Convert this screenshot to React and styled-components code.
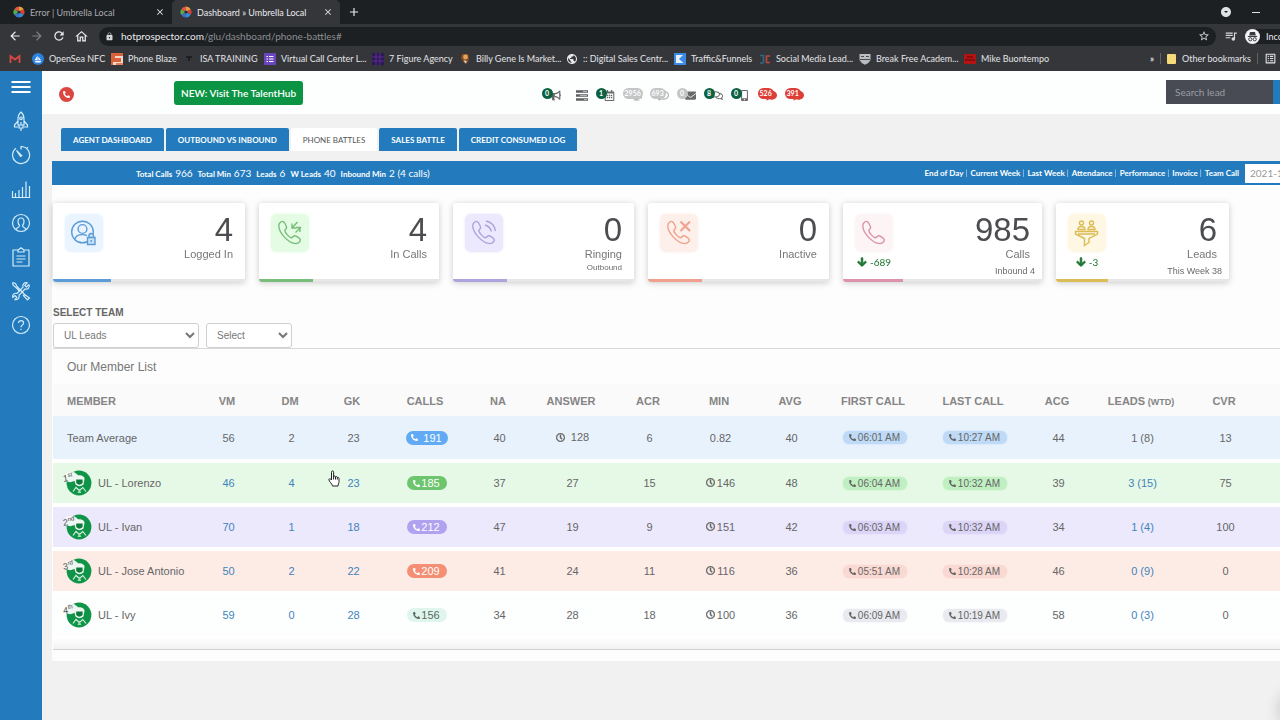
import React from "react";
import styled, { createGlobalStyle } from "styled-components";
import {
    MdArrowBack,
    MdArrowForward,
    MdRefresh,
    MdOutlineHome,
    MdLock,
    MdStarBorder,
    MdQueueMusic,
    MdClose,
    MdAdd,
    MdPublic,
    MdListAlt,
    MdArrowDropDownCircle,
} from "react-icons/md";
import {
    FaPhoneAlt,
    FaBullhorn,
    FaRegCalendarAlt,
    FaDesktop,
    FaRegComment,
    FaEnvelope,
    FaRegComments,
    FaMobileAlt,
    FaArrowDown,
    FaRegClock,
    FaComment,
} from "react-icons/fa";

const QueueBars = () => (
    <svg width="12" height="11" viewBox="0 0 12 11">
        <path d="M0 1.5H12M0 5.5H12M0 9.5H12" stroke="#5f6062" strokeWidth="2.6" />
        <path d="M7 1.5H11M4 5.5H11M8 9.5H11" stroke="#c9caca" strokeWidth="0.8" />
    </svg>
);

const bookmarks = [
    { label: "", width: 27, icon: "gmail" },
    { label: "OpenSea NFC", width: 79, icon: "sea" },
    { label: "Phone Blaze", width: 72, icon: "blaze" },
    { label: "ISA TRAINING", width: 81, icon: "isa" },
    { label: "Virtual Call Center L...", width: 108, icon: "list" },
    { label: "7 Figure Agency", width: 87, icon: "grid" },
    { label: "Billy Gene Is Market...", width: 107, icon: "billy" },
    { label: ":: Digital Sales Centr...", width: 108, icon: "globe" },
    { label: "Traffic&Funnels", width: 85, icon: "traffic" },
    { label: "Social Media Lead...", width: 100, icon: "social" },
    { label: "Break Free Academ...", width: 105, icon: "shield" },
    { label: "Mike Buontempo", width: 90, icon: "mike" },
];

const alerts = [
    { Icon: FaBullhorn, count: "0", tone: "#0b6141" },
    { Icon: QueueBars },
    { Icon: FaRegCalendarAlt, count: "1", tone: "#0b6141" },
    { Icon: FaDesktop, count: "2956", tone: "#c4c6c6", muted: true },
    { Icon: FaRegComment, count: "693", tone: "#c4c6c6", muted: true },
    { Icon: FaEnvelope, count: "0", tone: "#c4c6c6" },
    { Icon: FaRegComments, count: "8", tone: "#0b6141" },
    { Icon: FaMobileAlt, count: "0", tone: "#0b6141" },
    { Icon: FaComment, count: "526", tone: "#dc3f37", iconTone: "#dc3f37" },
    { Icon: FaComment, count: "391", tone: "#dc3f37", iconTone: "#dc3f37" },
];

const totals = [
    ["Total Calls", "966"],
    ["Total Min", "673"],
    ["Leads", "6"],
    ["W Leads", "40"],
    ["Inbound Min", "2 (4 calls)"],
];

const reports = ["End of Day", "Current Week", "Last Week", "Attendance", "Performance", "Invoice", "Team Call"];

const stats = [
    { icon: "user", value: "4", label: "Logged In", color: "#5b9bd8", tint: "#e9f4fe" },
    { icon: "incall", value: "4", label: "In Calls", color: "#78bd7a", tint: "#e3fce3" },
    { icon: "ringing", value: "0", label: "Ringing", note: "Outbound", color: "#aea3dc", tint: "#ece8fd" },
    { icon: "inactive", value: "0", label: "Inactive", color: "#f0a08c", tint: "#fdefe9" },
    { icon: "phone", value: "985", label: "Calls", note: "Inbound 4", trend: "-689", color: "#dc93aa", tint: "#fdf4f6" },
    { icon: "funnel", value: "6", label: "Leads", note: "This Week 38", trend: "-3", color: "#dcbc55", tint: "#fdf7e3" },
];

const columns = [
    ["MEMBER", 142],
    ["VM", 64],
    ["DM", 62],
    ["GK", 62],
    ["CALLS", 84],
    ["NA", 62],
    ["ANSWER", 84],
    ["ACR", 70],
    ["MIN", 72],
    ["AVG", 70],
    ["FIRST CALL", 96],
    ["LAST CALL", 104],
    ["ACG", 64],
    ["LEADS", 104],
    ["CVR", 62],
    ["", 25],
];

const average = {
    vm: 56, dm: 2, gk: 23, calls: 191, na: 40, answer: 128, acr: 6, min: "0.82", avg: 40,
    first: "06:01 AM", last: "10:27 AM", acg: 44, leads: "1 (8)", cvr: 13,
};

const members = [
    {
        name: "UL - Lorenzo", rank: "1", suffix: "st", row: "#e6f9e6", pill: "#6dc56d", time: "#c0f0c2", ink: "#fff",
        vm: 46, dm: 4, gk: 23, calls: 185, na: 37, answer: 27, acr: 15, min: 146, avg: 48,
        first: "06:04 AM", last: "10:32 AM", acg: 39, leads: "3 (15)", cvr: 75,
    },
    {
        name: "UL - Ivan", rank: "2", suffix: "nd", row: "#ece9fc", pill: "#b1a2f0", time: "#dcd5f8", ink: "#fff",
        vm: 70, dm: 1, gk: 18, calls: 212, na: 47, answer: 19, acr: 9, min: 151, avg: 42,
        first: "06:03 AM", last: "10:32 AM", acg: 34, leads: "1 (4)", cvr: 100,
    },
    {
        name: "UL - Jose Antonio", rank: "3", suffix: "rd", row: "#fdece6", pill: "#f58f74", time: "#f9d9d2", ink: "#fff",
        vm: 50, dm: 2, gk: 22, calls: 209, na: 41, answer: 24, acr: 11, min: 116, avg: 36,
        first: "05:51 AM", last: "10:28 AM", acg: 46, leads: "0 (9)", cvr: 0,
    },
    {
        name: "UL - Ivy", rank: "4", suffix: "th", row: "#fdfefe", pill: "#e0f6ed", time: "#e9eaf0", ink: "#5a6b66",
        vm: 59, dm: 0, gk: 28, calls: 156, na: 34, answer: 28, acr: 18, min: 100, avg: 36,
        first: "06:09 AM", last: "10:19 AM", acg: 58, leads: "0 (3)", cvr: 0,
    },
];

const Favicon = () => (
    <svg width="12" height="12" viewBox="0 0 12 12">
        <path d="M6 6V0.5A5.5 5.5 0 0 1 10.8 3.3Z" fill="#e8a13a" />
        <path d="M6 6L10.8 3.3A5.5 5.5 0 0 1 10.8 8.8Z" fill="#d8423a" />
        <path d="M6 6L10.8 8.8A5.5 5.5 0 0 1 6 11.5Z" fill="#2f8fd0" />
        <path d="M6 6V11.5A5.5 5.5 0 0 1 1.2 8.8Z" fill="#3f6fc4" />
        <path d="M6 6L1.2 8.8A5.5 5.5 0 0 1 1.2 3.3Z" fill="#55b04a" />
        <path d="M6 6L1.2 3.3A5.5 5.5 0 0 1 6 0.5Z" fill="#e0564b" />
        <circle cx="6" cy="6" r="1.6" fill="#2b2c30" />
    </svg>
);

const bookmarkArt = {
    gmail: (
        <path d="M1.5 10V3L6 6.5L10.5 3V10" fill="none" stroke="#d9493e" strokeWidth="1.8" />
    ),
    sea: (
        <>
            <circle cx="6" cy="6" r="6" fill="#2a81e0" />
            <path d="M5.6 2.5V7H2.8ZM6.4 3.4L8.8 7H6.4ZM2.5 7.8H9.5L8.3 9.4H3.8Z" fill="#fff" />
        </>
    ),
    blaze: (
        <>
            <rect width="12" height="12" fill="#f2d8ca" />
            <path d="M0 0H12V3H4V5H10V9H2V12H0Z" fill="#d9623b" />
            <path d="M3 7H8M5 11H12" stroke="#d9623b" strokeWidth="1.4" />
        </>
    ),
    isa: <path d="M3 4H9M6 4V8" stroke="#17181b" strokeWidth="1.6" />,
    list: (
        <>
            <rect width="12" height="12" rx="1" fill="#6a45bd" />
            <path d="M2.5 3.5H4M2.5 6H4M2.5 8.5H4M5 3.5H9.5M5 6H9.5M5 8.5H9.5" stroke="#fff" strokeWidth="1.2" />
        </>
    ),
    grid: (
        <>
            <rect width="12" height="12" fill="#2a1a52" />
            <path d="M0 4H12M0 8H12M4 0V12M8 0V12" stroke="#5a2a90" strokeWidth="1" />
        </>
    ),
    billy: (
        <>
            <path d="M3 1H9L10 6L8 11L4 9L2 5Z" fill="#8a4d20" />
            <circle cx="6.5" cy="4" r="2.4" fill="#e3a45f" />
            <path d="M5 7L8 8.5L6 10.5Z" fill="#ddd" />
        </>
    ),
    traffic: (
        <>
            <rect width="12" height="12" fill="#3b8ae6" />
            <path d="M2 2H9L5 6L9.5 10H2Z" fill="#e8f2fd" />
        </>
    ),
    social: (
        <>
            <path d="M1 2.5H4.5V9Q4 10.5 1 10" fill="none" stroke="#2e6684" strokeWidth="1.7" />
            <path d="M11 3H7.5V9.5H11" fill="none" stroke="#b8473e" strokeWidth="1.7" />
        </>
    ),
    shield: (
        <>
            <path d="M0.5 1H11.5V7Q10 10.5 6 11.8Q2 10.5 0.5 7Z" fill="#b9bcc0" />
            <path d="M2 3.5H5M7 3.5H10M1 6.5H11" stroke="#4a4d52" strokeWidth="1.2" />
        </>
    ),
    mike: (
        <>
            <rect y="1" width="12" height="10" fill="#b31313" />
            <path d="M3 4H9M1 7H11" stroke="#5a0808" strokeWidth="1.2" />
        </>
    ),
};

const BookmarkIcon = ({ name }) =>
    name === "globe" ? (
        <MdPublic size={12} color="#e8eaed" />
    ) : (
        <svg width="12" height="12" viewBox="0 0 12 12">
            {bookmarkArt[name]}
        </svg>
    );

const navArt = {
    Launch: (
        <path d="M10 1C7.6 3 7 5.4 7 8V14H13V8C13 5.4 12.4 3 10 1ZM7 10L3.5 14V16H7M13 10L16.5 14V16H13M8 14V17H12V14M10 17V20M10 6A1.3 1.3 0 1 0 10 8.6A1.3 1.3 0 1 0 10 6M10 11V14" />
    ),
    Timer: <path d="M5 3.2A8.5 8.5 0 1 0 10 1.5V4.5M10.8 10.6L5.5 5.5L9.5 11.4ZM15.5 3.5L16.8 2.2" />,
    Reports: <path d="M1.5 12V18.5H4.5V14M1.5 18.5H18.5V7M8 18.5V11M11.5 18.5V8M15 18.5V2.5M4.5 18.5V14" />,
    Profile: (
        <path d="M10 1.5A8.5 8.5 0 1 0 10 18.5A8.5 8.5 0 1 0 10 1.5M5 16.6C5 14.5 8.5 15 8.5 12.5C6.5 10.5 6 5 10 5C14 5 13.5 10.5 11.5 12.5C11.5 15 15 14.5 15 16.6" />
    ),
    Tasks: (
        <path d="M7 3H2V19H18V3H13M7 5V3L10 0.8L13 3V5ZM5.5 9H14.5M5.5 12H14.5M5.5 15H11.5" />
    ),
    Tools: (
        <path d="M1.5 1.5L4.5 2.5L6 5.5L14.5 14.5M13 13L18.5 17L16.5 18.8L12 14M18 3.5L15.5 6L13.8 4.4L16.2 1.8C13.5 0.8 11 3.5 12 6.2L6 12.5C3.5 11.5 0.8 14 1.8 16.5L4 14.6L5.8 16.4L4 18.6C6.5 19.3 9 16.8 8 14.3L14 8C16.8 9 19.2 6 18 3.5M1.5 1.5L2 4L5 6.5L9 10.5" />
    ),
    Help: (
        <path d="M10 1.5A8.5 8.5 0 1 0 10 18.5A8.5 8.5 0 1 0 10 1.5M7.5 8C7.5 4.8 12.6 4.8 12.6 8C12.6 10 10 9.8 10 12.2M10 13.8V15" />
    ),
};

const handset =
    "M7.2 2.6C5.6 1.8 3 3.8 2.8 6.2C2.4 13.5 12.5 24.6 20 24.6C22.6 24.6 25 22 24.2 20.4C23.4 19 20.2 16.8 18.6 16.8C17.2 16.8 16.8 18.8 15.4 18.8C13.4 18.6 8.8 13.6 8.8 11.6C8.8 10.4 10.8 10 10.6 8.6C10.4 6.8 8.6 3.4 7.2 2.6Z";

const statArt = {
    user: (
        <>
            <circle cx="12.5" cy="13" r="10.8" />
            <circle cx="12.5" cy="10" r="4.4" />
            <path d="M4.8 20.5C5.5 16.8 8.6 15.6 12.5 15.6C14.5 15.6 15.8 16 17 16.6" />
            <path d="M17.5 18.5H25V25.5H17.5ZM19 18.5V16.5C19 13.8 23.5 13.8 23.5 16.5V18.5M21.2 21V23" fill="#c9e0f6" />
        </>
    ),
    incall: (
        <>
            <path d={handset} />
            <path d="M21.5 3L16 9M16 4.5V9H20.5M25 8L19.5 13.5M24 13V8.5H20" />
        </>
    ),
    ringing: (
        <>
            <path d={handset} />
            <path d="M16 2C21 3 24.5 6.5 25.5 12M15 6C18.5 7 20.5 9 21.5 12.5" />
        </>
    ),
    inactive: (
        <>
            <path d={handset} />
            <path d="M15.5 2.5L25 12M25 2.5L15.5 12" strokeWidth="2" />
        </>
    ),
    phone: <path d={handset} />,
    funnel: (
        <>
            <circle cx="8.5" cy="4" r="2" />
            <circle cx="18.5" cy="4" r="2" />
            <path d="M5 10.5C5 6.5 12 6.5 12 10.5ZM15 10.5C15 6.5 22 6.5 22 10.5ZM2.5 12.5H24.5V15L16 19.5V23.5L11.5 26.5V19.5L2.5 15ZM5 15H22" />
        </>
    ),
};

const AvatarArt = () => (
    <svg width="26" height="26" viewBox="0 0 26 26">
        <circle cx="13" cy="13" r="12.4" fill="#0f9448" />
        <path d="M0 3L8 2L12 5L11 9Q6 14 0 11Z" fill="#fff" opacity="0.92" />
        <path d="M8 9C8 4 18.5 4 18.5 9L17.5 14.5Q13.5 18 9.5 14.5Z" fill="#eef8f0" />
        <path d="M10.2 9.5H16.6V13Q13.4 16.4 10.2 13Z" fill="#0c7a3a" />
        <path d="M7 21.5L10 17.5L13.4 20.5L16.8 17.5L20 21.5" fill="none" stroke="#d8efdf" strokeWidth="1.2" />
        <path d="M13.4 18.5L11.6 23H15.2Z" fill="#a9dbbb" />
    </svg>
);

const MemberRow = ({ data, first }) => {
    const Value = first ? "span" : StatLink;
    const href = first ? undefined : "#";
    return (
        <Row $tint={data.row} $tall={first}>
            <MemberCell>
                {first ? (
                    "Team Average"
                ) : (
                    <Member>
                        <Avatar>
                            <AvatarArt />
                            <Rank>
                                {data.rank}
                                <sup>{data.suffix}</sup>
                            </Rank>
                        </Avatar>
                        {data.name}
                    </Member>
                )}
            </MemberCell>
            <td><Value href={href}>{data.vm}</Value></td>
            <td><Value href={href}>{data.dm}</Value></td>
            <td><Value href={href}>{data.gk}</Value></td>
            <td>
                <CallPill $bg={data.pill} $ink={data.ink} $wide={first}>
                    <FaPhoneAlt size={7} />
                    {data.calls}
                </CallPill>
            </td>
            <td>{data.na}</td>
            <td>
                <Timed $gap={first ? 6 : 2}>
                    {first && <FaRegClock size={9} />}
                    {data.answer}
                </Timed>
            </td>
            <td>{data.acr}</td>
            <td>
                <Timed $gap={2}>
                    {!first && <FaRegClock size={9} />}
                    {data.min}
                </Timed>
            </td>
            <td>{data.avg}</td>
            <td><TimePill $bg={data.time}><FaPhoneAlt size={7} />{data.first}</TimePill></td>
            <td><TimePill $bg={data.time}><FaPhoneAlt size={7} />{data.last}</TimePill></td>
            <td>{data.acg}</td>
            <td><Value href={href}>{data.leads}</Value></td>
            <td>{data.cvr}</td>
            <td />
        </Row>
    );
};

const App = () => {
    const [team, setTeam] = React.useState("UL Leads");
    const [search, setSearch] = React.useState("");
    const [date, setDate] = React.useState("2021-12-01");

    return (
        <Window>
            <GlobalStyle />

            {/* Browser */}
            <TabStrip>
                <BrowserTab>
                    <Favicon />
                    <span>Error | Umbrella Local</span>
                    <IconButton aria-label="Close tab"><MdClose size={10} /></IconButton>
                </BrowserTab>
                <BrowserTab $active>
                    <Favicon />
                    <span>Dashboard » Umbrella Local</span>
                    <IconButton aria-label="Close tab"><MdClose size={10} /></IconButton>
                </BrowserTab>
                <IconButton aria-label="New tab"><MdAdd size={14} /></IconButton>
                <WindowButtons>
                    <MdArrowDropDownCircle size={12} />
                    <Minimize />
                </WindowButtons>
            </TabStrip>
            <Toolbar>
                <IconButton aria-label="Back"><MdArrowBack size={14} /></IconButton>
                <IconButton aria-label="Forward" $dim><MdArrowForward size={14} /></IconButton>
                <IconButton aria-label="Reload"><MdRefresh size={14} /></IconButton>
                <IconButton aria-label="Home"><MdOutlineHome size={15} /></IconButton>
                <AddressBar>
                    <MdLock size={9} />
                    <Address>
                        <b>hotprospector.com</b>/glu/dashboard/phone-battles#
                    </Address>
                    <MdStarBorder size={12} />
                </AddressBar>
                <ToolbarEnd>
                    <MdQueueMusic size={14} />
                    <Incognito>
                        <svg width="15" height="15" viewBox="0 0 15 15">
                            <circle cx="7.5" cy="7.5" r="7.5" fill="#f1f3f4" />
                            <path d="M5 3H10L10.8 6.5H4.2ZM2.8 7H12.2V8H2.8Z" fill="#3a3b3f" />
                            <circle cx="5.3" cy="10.3" r="1.6" fill="none" stroke="#3a3b3f" />
                            <circle cx="9.7" cy="10.3" r="1.6" fill="none" stroke="#3a3b3f" />
                        </svg>
                        Incognito
                    </Incognito>
                </ToolbarEnd>
            </Toolbar>
            <BookmarkBar>
                {bookmarks.map((mark) => (
                    <Bookmark key={mark.icon} href="#" $width={mark.width} aria-label={mark.label || "Gmail"}>
                        <BookmarkIcon name={mark.icon} />
                        {mark.label}
                    </Bookmark>
                ))}
                <BookmarkEnd>
                    <b>»</b>
                    <Divider />
                    <Folder />
                    Other bookmarks
                    <Divider />
                    <MdListAlt size={13} />
                </BookmarkEnd>
            </BookmarkBar>

            <Body>
                <Sidebar>
                    <NavButton aria-label="Menu">
                        <svg width="20" height="14" viewBox="0 0 20 14">
                            <path d="M0.5 2H19.5M0.5 7H19.5M0.5 12H19.5" />
                        </svg>
                    </NavButton>
                    {Object.keys(navArt).map((name) => (
                        <NavButton key={name} aria-label={name}>
                            <svg width="20" height="20" viewBox="0 0 20 20">{navArt[name]}</svg>
                        </NavButton>
                    ))}
                </Sidebar>

                <Page>
                    <Header>
                        <CallButton aria-label="Call"><FaPhoneAlt size={7} /></CallButton>
                        <TalentButton>NEW: Visit The TalentHub</TalentButton>
                        <Alerts>
                            {alerts.map(({ Icon, count, tone, muted, iconTone }, i) => (
                                <Alert key={i} $muted={muted} $tone={iconTone}>
                                    <Icon size={11} />
                                    {count && <Badge $tone={tone}>{count}</Badge>}
                                </Alert>
                            ))}
                        </Alerts>
                        <Search>
                            <SearchInput
                                type="text"
                                aria-label="Search lead"
                                placeholder="Search lead"
                                value={search}
                                onChange={(ev) => setSearch(ev.target.value)}
                            />
                            <SearchButton aria-label="Search" />
                        </Search>
                    </Header>

                    <Content>
                        <Tabs>
                            <Tab>Agent Dashboard</Tab>
                            <Tab>Outbound vs Inbound</Tab>
                            <Tab $active>Phone Battles</Tab>
                            <Tab>Sales Battle</Tab>
                            <Tab>Credit Consumed Log</Tab>
                        </Tabs>

                        <SummaryBar>
                            <Totals>
                                {totals.map(([label, value]) => (
                                    <span key={label}>
                                        {label} <b>{value}</b>
                                    </span>
                                ))}
                            </Totals>
                            <Reports>
                                {reports.map((label) => (
                                    <a key={label} href="#">{label}</a>
                                ))}
                            </Reports>
                            <DateInput
                                type="text"
                                aria-label="Date"
                                value={date}
                                onChange={(ev) => setDate(ev.target.value)}
                            />
                        </SummaryBar>

                        <Board>
                            <Cards>
                                {stats.map((stat) => (
                                    <Card key={stat.label}>
                                        <CardSide>
                                            <IconTile $tint={stat.tint} $color={stat.color}>
                                                <svg width="28" height="28" viewBox="0 0 28 28">{statArt[stat.icon]}</svg>
                                            </IconTile>
                                            {stat.trend && (
                                                <Trend>
                                                    <FaArrowDown size={10} />
                                                    {stat.trend}
                                                </Trend>
                                            )}
                                        </CardSide>
                                        <CardText>
                                            <CardValue>{stat.value}</CardValue>
                                            <CardLabel>{stat.label}</CardLabel>
                                            {stat.note && <CardNote $low={stat.trend}>{stat.note}</CardNote>}
                                        </CardText>
                                        <Progress $color={stat.color} />
                                    </Card>
                                ))}
                            </Cards>

                            <TeamLabel htmlFor="team">SELECT TEAM</TeamLabel>
                            <Filters>
                                <Select id="team" $width={146} value={team} onChange={(ev) => setTeam(ev.target.value)}>
                                    <option>UL Leads</option>
                                </Select>
                                <Select aria-label="Filter" $width={86} defaultValue="Select">
                                    <option>Select</option>
                                </Select>
                            </Filters>

                            <ListPanel>
                                <ListTitle>Our Member List</ListTitle>
                                <Table>
                                    <colgroup>
                                        {columns.map(([label, width]) => (
                                            <Col key={label} $width={width} />
                                        ))}
                                    </colgroup>
                                    <thead>
                                        <tr>
                                            {columns.map(([label]) => (
                                                <th key={label} scope="col">
                                                    {label}
                                                    {label === "LEADS" && <small> (WTD)</small>}
                                                </th>
                                            ))}
                                        </tr>
                                    </thead>
                                    <tbody>
                                        <MemberRow
                                            first
                                            data={{ ...average, row: "#e8f2fd", pill: "#62abf4", time: "#bfdaf6", ink: "#fff" }}
                                        />
                                        {members.map((member) => (
                                            <MemberRow key={member.name} data={member} />
                                        ))}
                                    </tbody>
                                </Table>
                            </ListPanel>
                        </Board>
                    </Content>
                </Page>
            </Body>
            <ChatShadow />
            <Pointer>
                <svg width="12" height="17" viewBox="0 0 12 17">
                    <path
                        d="M3.5 10V2.2C3.5 0.4 5.6 0.4 5.6 2.2V6.5C6 5.6 7.4 5.8 7.5 6.9C8 6.2 9.3 6.5 9.3 7.5C9.9 7 11 7.4 11 8.4V11.5C11 13.5 10 14.5 10 16H4.5C4 13.5 1 11.5 0.8 9.5C1 8.4 2.5 8.6 3.5 10Z"
                        fill="#fff"
                        stroke="#222"
                    />
                    <path d="M5.6 6V9.5M7.5 7V9.5M9.3 7.5V9.5" stroke="#222" />
                </svg>
            </Pointer>
        </Window>
    );
};

export default App;

const GlobalStyle = createGlobalStyle`
    * {
        box-sizing: border-box;
    }
    body {
        margin: 0;
        background: #f1f1f1;
        font-family: "Liberation Sans", Arial, sans-serif;
    }
    button, input, select {
        font: inherit;
    }
    button {
        border: 0;
        cursor: pointer;
    }
    svg {
        flex: none;
    }
`;

const Window = styled.div`
    display: flex;
    flex-direction: column;
    min-height: 100vh;
    overflow: hidden;
`;

const TabStrip = styled.div`
    display: flex;
    align-items: center;
    height: 24px;
    background: #1d2023;
    color: #dfe1e4;
    font: 9px Lato, sans-serif;
`;

const BrowserTab = styled.div`
    display: flex;
    align-items: center;
    gap: 5px;
    width: ${(props) => (props.$active ? 168 : 172)}px;
    height: 24px;
    padding: 0 5px 0 ${(props) => (props.$active ? 8 : 13)}px;
    border-radius: 5px 5px 0 0;
    background: ${(props) => (props.$active ? "#35363a" : "transparent")};
    color: ${(props) => (props.$active ? "#e8eaed" : "#a9acb0")};
    white-space: nowrap;

    span {
        flex: 1;
    }
`;

const IconButton = styled.button`
    display: flex;
    align-items: center;
    justify-content: center;
    min-width: 14px;
    padding: 0;
    background: none;
    color: ${(props) => (props.$dim ? "#7d8084" : "#e8eaed")};

    ${TabStrip} > & {
        margin-left: 7px;
    }
`;

const WindowButtons = styled.div`
    display: flex;
    align-items: center;
    gap: 20px;
    margin-left: auto;
    padding-right: 20px;
`;

const Minimize = styled.div`
    width: 8px;
    height: 1px;
    background: #dfe1e4;
`;

const Toolbar = styled.div`
    display: flex;
    align-items: center;
    gap: 8px;
    height: 24px;
    padding-left: 8px;
    background: #35363a;
    color: #d5d7da;
`;

const AddressBar = styled.div`
    display: flex;
    flex: 1;
    align-items: center;
    height: 19px;
    margin-left: 2px;
    padding: 0 6px;
    border-radius: 10px;
    background: #1d2023;
`;

const Address = styled.span`
    flex: 1;
    padding-left: 7px;
    color: #8b8e92;
    font: 10px Lato, sans-serif;

    b {
        color: #e8eaed;
        font-weight: 400;
    }
`;

const ToolbarEnd = styled.div`
    display: flex;
    align-items: center;
    gap: 7px;
    width: 56px;
`;

const Incognito = styled.div`
    display: flex;
    align-items: center;
    gap: 6px;
    border-radius: 8px 0 0 8px;
    background: #1d2023;
    color: #e8eaed;
    font: 9px Lato, sans-serif;
`;

const BookmarkBar = styled.div`
    display: flex;
    align-items: center;
    height: 23px;
    padding: 0 3px 2px 5px;
    background: #35363a;
    color: #e3e5e8;
    font: 9px Lato, sans-serif;
    white-space: nowrap;
`;

const Bookmark = styled.a`
    display: flex;
    flex: none;
    align-items: center;
    gap: 5px;
    width: ${(props) => props.$width}px;
    padding-left: ${(props) => (props.$width === 27 ? 4 : 0)}px;
    color: inherit;
    text-decoration: none;
`;

const BookmarkEnd = styled.div`
    display: flex;
    align-items: center;
    gap: 6px;
    margin-left: auto;
`;

const Divider = styled.div`
    width: 1px;
    height: 11px;
    background: #5f6368;
`;

const Folder = styled.div`
    width: 9px;
    height: 10px;
    border-radius: 1px;
    background: #f6d978;
`;

const Body = styled.div`
    display: flex;
    flex: 1;
`;

const Sidebar = styled.nav`
    display: flex;
    flex: none;
    flex-direction: column;
    width: 42px;
    background: #237bbd;
`;

const NavButton = styled.button`
    display: flex;
    align-items: center;
    justify-content: center;
    width: 41px;
    height: 34px;
    padding: 0 0 2px;
    background: none;

    path {
        fill: none;
        stroke: #d3ecfa;
        stroke-width: 1.2;
    }
    &:first-child path {
        stroke: #fff;
        stroke-width: 1.8;
    }
`;

const Page = styled.div`
    flex: 1;
    min-width: 0;
`;

const Header = styled.header`
    display: flex;
    align-items: center;
    height: 43px;
    padding-left: 17px;
    background: #fdfefe;
`;

const CallButton = styled.button`
    display: flex;
    align-items: center;
    justify-content: center;
    width: 15px;
    height: 15px;
    margin-top: 4px;
    padding: 0;
    border-radius: 50%;
    background: #dd4640;
    color: #fff;
`;

const TalentButton = styled.button`
    height: 24px;
    margin-left: 100px;
    padding: 0 7px;
    border-radius: 3px;
    background: #0b9444;
    color: #fff;
    font: 600 10px Lato, sans-serif;
    white-space: nowrap;
`;

const Alerts = styled.div`
    display: flex;
    flex: 1;
    justify-content: center;
    padding: 4px 116px 0 0;
`;

const Alert = styled.div`
    position: relative;
    display: flex;
    align-items: center;
    justify-content: center;
    width: 27px;
    height: 16px;
    color: ${(props) => props.$tone || (props.$muted ? "#a9abab" : "#68696b")};

    svg {
        margin-top: 2px;
    }
`;

const Badge = styled.span`
    position: absolute;
    top: 1px;
    left: 0;
    min-width: 11px;
    height: 11px;
    padding: 0 2px;
    border-radius: 6px;
    background: ${(props) => props.$tone};
    color: #fff;
    font: bold 7px/11px Lato, sans-serif;
    text-align: center;
`;

const Search = styled.div`
    display: flex;
    flex: none;
    height: 24px;
    margin: 0 -17px 2px 0;
`;

const SearchInput = styled.input`
    width: 107px;
    padding: 0 9px;
    border: 0;
    background: #484b54;
    color: #fff;
    font: 10px Lato, sans-serif;

    &::placeholder {
        color: #9a9da4;
    }
`;

const SearchButton = styled.button`
    width: 24px;
    background: #237bbd;
`;

const Content = styled.main`
    padding: 14px 0 0 10px;
`;

const Tabs = styled.div`
    display: flex;
    gap: 2px;
    padding-left: 9px;
`;

const Tab = styled.button`
    height: 23px;
    padding: 0 12px;
    border-radius: 2px 2px 0 0;
    background: ${(props) => (props.$active ? "#fff" : "#237bbd")};
    color: ${(props) => (props.$active ? "#555" : "#fff")};
    font: ${(props) => (props.$active ? 400 : 700)} 8px Lato, sans-serif;
    text-transform: uppercase;
    white-space: nowrap;
`;

const SummaryBar = styled.div`
    display: flex;
    align-items: center;
    height: 24px;
    margin: 10px -40px 0 0;
    padding-left: 84px;
    background: #237bbd;
    color: #fff;
    font: bold 8px Lato, sans-serif;
    white-space: nowrap;
`;

const Totals = styled.div`
    display: flex;
    flex: 1;
    align-items: center;
    gap: 5px;

    b {
        margin-left: 1px;
        font-size: 10px;
        font-weight: 400;
    }
`;

const Reports = styled.div`
    display: flex;

    a {
        color: #fff;
        text-decoration: none;
    }
    a + a::before {
        content: "|";
        padding: 0 3px 0 2px;
        font-weight: 400;
        opacity: 0.7;
    }
`;

const DateInput = styled.input`
    width: 75px;
    height: 19px;
    margin-left: 6px;
    padding: 0 4px;
    border: 1px solid #fff;
    background: #fff;
    color: #999;
    font: 10px Lato, sans-serif;
`;

const Board = styled.section`
    padding: 18px 0 11px 1px;
    background: #fdfdfd;
`;

const Cards = styled.div`
    display: grid;
    grid-template-columns: 192fr 180fr 181fr 181fr 199fr 173fr;
    gap: 14px;
    padding-right: 51px;
`;

const Card = styled.article`
    position: relative;
    display: flex;
    justify-content: space-between;
    height: 79px;
    padding: 10px 7px 0 11px;
    overflow: hidden;
    border-radius: 3px;
    background: #fff;
    filter: drop-shadow(0 1px 3px rgba(0, 0, 0, 0.2));
`;

const CardSide = styled.div`
    display: flex;
    flex-direction: column;
    align-items: center;
    width: 40px;
`;

const IconTile = styled.div`
    display: flex;
    align-items: center;
    justify-content: center;
    width: 38px;
    height: 38px;
    margin-top: 1px;
    border-radius: 6px;
    background: ${(props) => props.$tint};
    box-shadow: 0 0 3px ${(props) => props.$tint};

    svg {
        fill: none;
        stroke: ${(props) => props.$color};
        stroke-width: 1.4;
    }
`;

const Trend = styled.span`
    display: flex;
    align-items: center;
    gap: 3px;
    margin-top: 4px;
    color: #1c7430;
    font: 10px/12px Lato, sans-serif;

    path {
        stroke: #1c7430;
        stroke-width: 50;
    }
`;

const CardText = styled.div`
    padding-right: 5px;
    color: #777;
    text-align: right;
`;

const CardValue = styled.div`
    color: #4c4d50;
    font-size: 33px;
    line-height: 34px;
`;

const CardLabel = styled.div`
    font-size: 11px;
    line-height: 15px;
`;

const CardNote = styled.div`
    margin: ${(props) => (props.$low ? "3px -5px 0 0" : "0")};
    color: #6b6b6b;
    font-size: ${(props) => (props.$low ? 9 : 8)}px;
    line-height: 12px;
`;

const Progress = styled.div`
    position: absolute;
    right: 0;
    bottom: 0;
    left: 0;
    height: 3px;
    background: linear-gradient(to right, ${(props) => props.$color} 30%, #e6e6e6 30%);
`;

const TeamLabel = styled.label`
    display: block;
    margin: 24px 0 3px;
    color: #666;
    font-size: 10px;
    font-weight: 700;
    line-height: 14px;
`;

const Filters = styled.div`
    display: flex;
    gap: 7px;
`;

const Select = styled.select`
    width: ${(props) => props.$width}px;
    height: 25px;
    padding-left: 6px;
    border: 1px solid #cfcfcf;
    border-radius: 3px;
    background: #fff;
    color: #777;
    font-size: 10px;
`;

const ListPanel = styled.div`
    padding-bottom: 10px;
    border-top: 1px solid #d9d9d9;
    border-bottom: 1px solid #d2d2d2;
    background: linear-gradient(to top, #f3f3f3, #fdfdfd 10px);
`;

const ListTitle = styled.h2`
    margin: 0;
    padding: 1px 0 0 14px;
    color: #777;
    font-size: 12px;
    font-weight: 400;
    line-height: 34px;
`;

const Table = styled.table`
    width: 100%;
    border-spacing: 0;
    table-layout: fixed;
    color: #666;
    font-size: 11px;
    text-align: center;

    th {
        height: 32px;
        padding: 2px 0 0;
        background: #fafafa;
        color: #858585;
        white-space: nowrap;
    }
    th:first-child {
        padding-left: 14px;
        text-align: left;
    }
    th small {
        font-size: 9px;
    }
    td {
        padding: 0 0 0 3px;
    }
`;

const Col = styled.col`
    width: ${(props) => props.$width}px;
`;

const Row = styled.tr`
    height: ${(props) => (props.$tall ? 47 : 44)}px;

    td {
        border-bottom: 4px solid #fff;
        background: ${(props) => props.$tint};
    }
`;

const MemberCell = styled.td`
    && {
        padding-left: 14px;
    }
    text-align: left;
    white-space: nowrap;
`;

const Member = styled.div`
    display: flex;
    align-items: center;
    gap: 6px;
`;

const Avatar = styled.div`
    position: relative;
    display: flex;
    margin-left: -1px;
`;

const Rank = styled.span`
    position: absolute;
    top: 3px;
    left: -3px;
    color: #444;
    font-size: 9px;
    line-height: 10px;
    transform: rotate(-8deg);

    sup {
        font-size: 6px;
        line-height: 0;
    }
`;

const StatLink = styled.a`
    color: #3f83bd;
    text-decoration: none;
`;

const CallPill = styled.span`
    display: inline-flex;
    align-items: center;
    justify-content: center;
    gap: ${(props) => (props.$wide ? 5 : 1)}px;
    width: ${(props) => (props.$wide ? 42 : 40)}px;
    height: 14px;
    border-radius: 7px;
    background: ${(props) => props.$bg};
    color: ${(props) => props.$ink};
`;

const Timed = styled.span`
    display: inline-flex;
    align-items: center;
    gap: ${(props) => props.$gap}px;

    path {
        stroke: currentColor;
        stroke-width: 30;
    }
`;

const TimePill = styled.span`
    display: inline-flex;
    align-items: center;
    justify-content: center;
    gap: 2px;
    width: 64px;
    height: 13px;
    border-radius: 6px;
    background: ${(props) => props.$bg};
    box-shadow: 0 0 2px ${(props) => props.$bg};
    font-size: 10px;
    white-space: nowrap;
`;

const ChatShadow = styled.div`
    position: fixed;
    right: -40px;
    bottom: -10px;
    width: 40px;
    height: 40px;
    border-radius: 50%;
    box-shadow: 0 0 16px rgba(0, 0, 0, 0.2);
`;

const Pointer = styled.div`
    position: fixed;
    top: 470px;
    left: 328px;
`;
